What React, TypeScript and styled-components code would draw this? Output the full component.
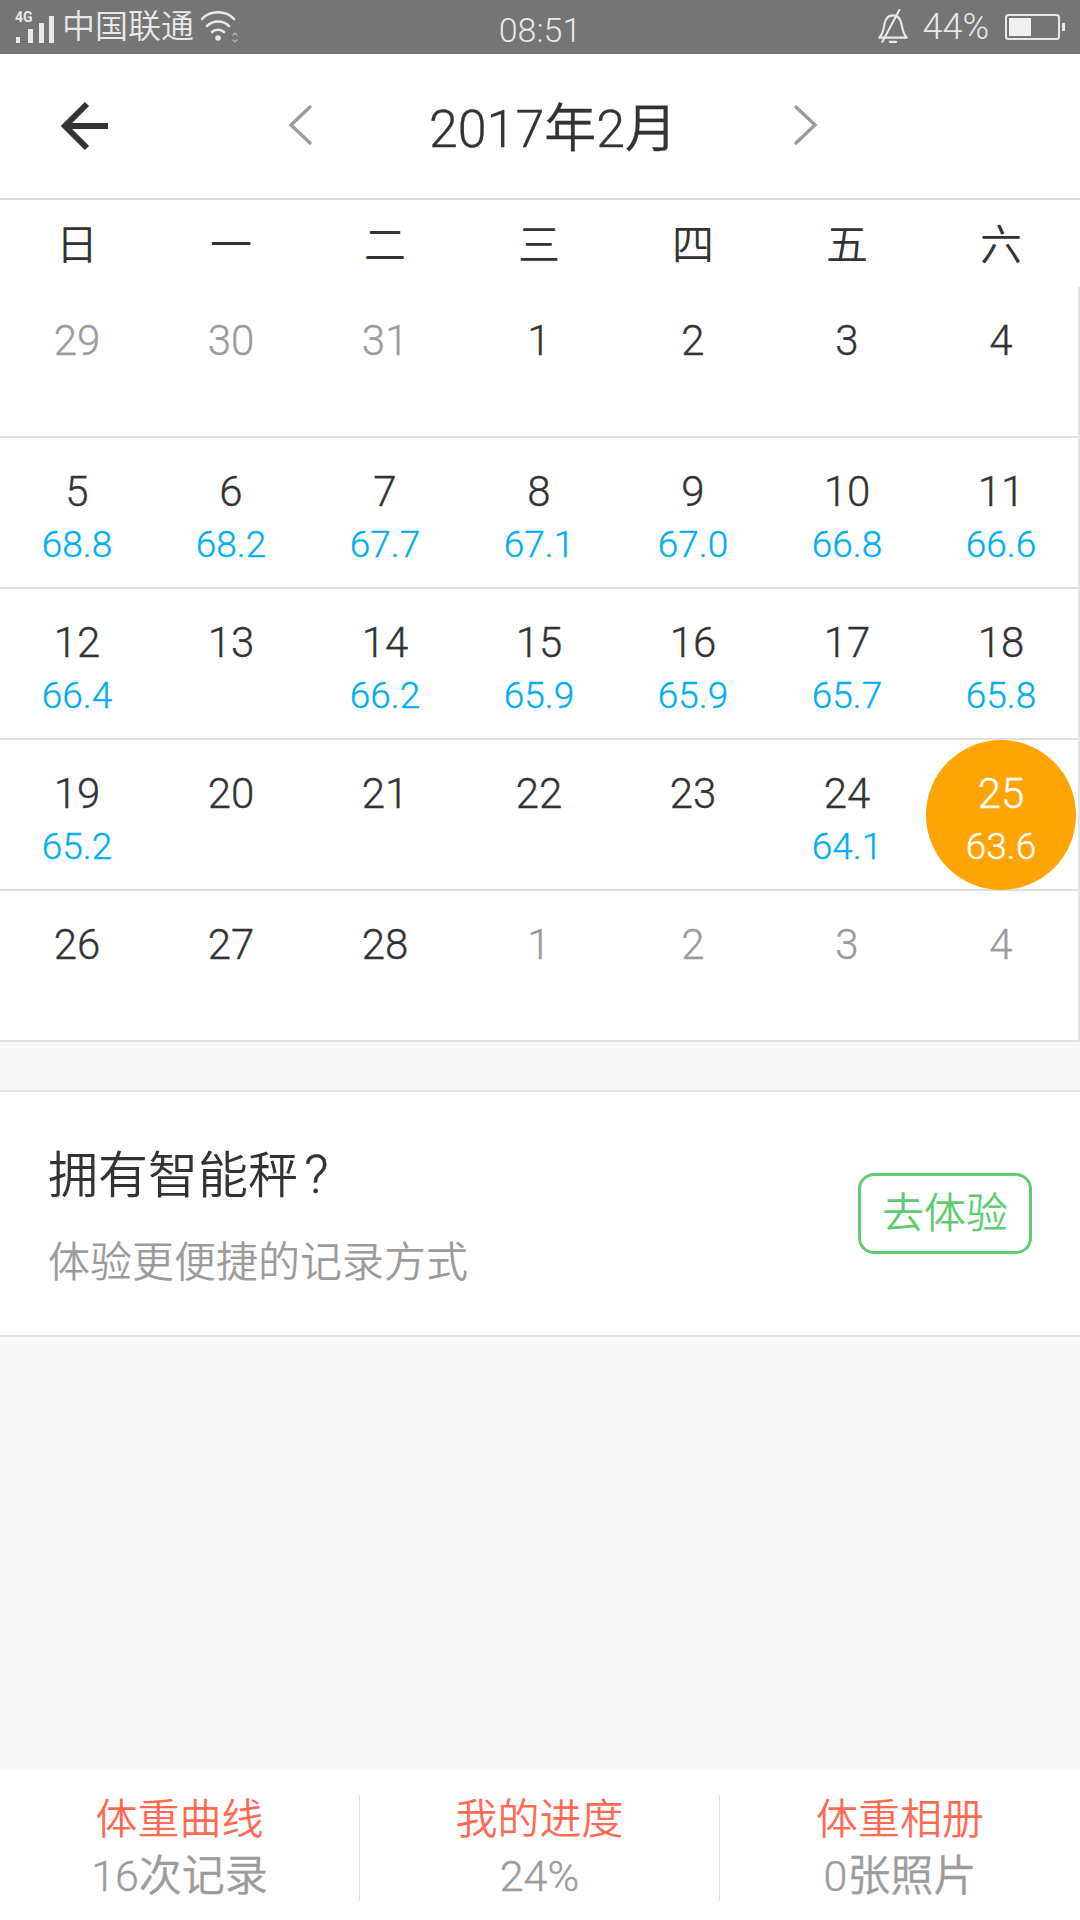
import React from 'react'
import styled, { createGlobalStyle, css } from 'styled-components'

const GlobalStyle = createGlobalStyle`
  html, body {
    margin: 0;
    padding: 0;
    background: #f8f8f8;
  }
  * {
    box-sizing: border-box;
  }
`

// Roboto only comes in 300/400 here, the reference digits sit between the two
const digitWeight = css`
  -webkit-text-stroke: 0.35px currentColor;
`

const Page = styled.div`
  width: 1080px;
  height: 1920px;
  display: flex;
  flex-direction: column;
  overflow: hidden;
  background: #f8f8f8;
  font-family: Roboto, 'Noto Sans CJK SC', sans-serif;
  font-weight: 350;
  color: #333;
`

const StatusBar = styled.div`
  height: 54px;
  flex: none;
  background: #757575;
  color: #e8e8e8;
  display: grid;
  grid-template-columns: 1fr auto 1fr;
  align-items: center;
  padding: 0 15px 0 15px;
`

const StatusLeft = styled.div`
  display: flex;
  align-items: center;
`

const StatusRight = styled.div`
  display: flex;
  align-items: center;
  justify-content: flex-end;
`

const Carrier = styled.span`
  font-size: 33px;
  line-height: 54px;
  margin-left: 7px;
  margin-right: 7px;
`

const Clock = styled.span`
  font-size: 34px;
  line-height: 54px;
  position: relative;
  top: 3px;
`

const Battery = styled.span`
  font-size: 36px;
  margin: 0 16px 0 13px;
`

const Header = styled.div`
  height: 146px;
  flex: none;
  background: #fff;
  border-bottom: 2px solid #ddd9d4;
  display: flex;
  align-items: center;
  padding-left: 61px;
`

const BackButton = styled.div`
  display: flex;
  width: 54px;
  margin-right: 172px;
`

const NavButton = styled.div`
  display: flex;
  width: 26px;
  position: relative;
  top: -1px;
`

const MonthTitle = styled.div`
  width: 480px;
  text-align: center;
  font-size: 52px;
  line-height: 60px;
  color: #333;
  position: relative;
  top: 4px;
  ${digitWeight}
`

const WeekRow = styled.div`
  height: 87px;
  flex: none;
  background: #fff;
  display: grid;
  grid-template-columns: repeat(7, 154px);
`

const WeekCell = styled.div`
  text-align: center;
  font-size: 42px;
  line-height: 92px;
  color: #333;
`

const CalendarGrid = styled.div`
  flex: none;
  background: #fff;
  display: grid;
  grid-template-columns: repeat(7, 154px);
  border-right: 2px solid #e2e2e2;
`

const DayCell = styled.div`
  height: 151px;
  position: relative;
  display: flex;
  flex-direction: column;
  align-items: center;
  padding-top: 29px;
  border-bottom: 2px solid #e0e0e0;
`

const SelectedCircle = styled.div`
  position: absolute;
  left: 2px;
  top: 0;
  width: 150px;
  height: 150px;
  border-radius: 50%;
  background: #ffa405;
`

const DayNumber = styled.div<{ $tone: 'normal' | 'muted' | 'selected' }>`
  position: relative;
  font-size: 42px;
  line-height: 50px;
  ${digitWeight}
  color: ${({ $tone }) =>
    $tone === 'muted' ? '#9c9c9c' : $tone === 'selected' ? '#fff' : '#333'};
`

const Weight = styled.div<{ $selected: boolean }>`
  position: relative;
  font-size: 37px;
  line-height: 42px;
  margin-top: 7px;
  ${digitWeight}
  color: ${({ $selected }) => ($selected ? '#fff' : '#00aeef')};
`

const Promo = styled.div`
  margin-top: 48px;
  height: 247px;
  flex: none;
  background: #fff;
  border-top: 2px solid #e2e2e2;
  border-bottom: 2px solid #e2e2e2;
  display: flex;
  align-items: center;
  justify-content: space-between;
  padding: 0 48px 0 48px;
`

const PromoText = styled.div`
  display: flex;
  flex-direction: column;
  padding-top: 6px;
`

const PromoTitle = styled.div`
  font-size: 50px;
  line-height: 60px;
  color: #333;
`

const QuestionMark = styled.span`
  font-size: 54px;
  margin-left: 6px;
  ${digitWeight}
`

const PromoHint = styled.div`
  font-size: 42px;
  line-height: 50px;
  margin-top: 32px;
  color: #9c9c9c;
`

const TryButton = styled.div`
  width: 174px;
  height: 81px;
  border: 3px solid #5fcb72;
  border-radius: 16px;
  color: #5fcb72;
  font-size: 42px;
  line-height: 75px;
  text-align: center;
`

const Spacer = styled.div`
  flex: 1;
`

const Footer = styled.div`
  height: 150px;
  flex: none;
  background: #fff;
  display: grid;
  grid-template-columns: 360px 360px 360px;
  padding: 25px 0 24px;
`

const FooterItem = styled.div<{ $divider: boolean }>`
  display: flex;
  flex-direction: column;
  align-items: center;
  border-right: ${({ $divider }) => ($divider ? '1px solid #e0e0e0' : 'none')};
`

const FooterTitle = styled.div`
  font-size: 42px;
  line-height: 50px;
  color: #ff6a55;
`

const FooterSub = styled.div`
  font-size: 43px;
  line-height: 50px;
  margin-top: 6px;
  color: #9c9c9c;
  ${digitWeight}
`

function SignalIcon() {
  return (
    <svg width="40" height="34" viewBox="0 0 40 34">
      <text x="0" y="12" fontSize="14" fontWeight="700" fill="#e8e8e8" fontFamily="Roboto, sans-serif">4G</text>
      <rect x="1" y="27" width="4" height="6" fill="#e8e8e8" />
      <rect x="13" y="19" width="5" height="14" fill="#e8e8e8" />
      <rect x="24" y="13" width="5" height="20" fill="#e8e8e8" />
      <rect x="34" y="6" width="5" height="27" fill="#e8e8e8" />
    </svg>
  )
}

function WifiIcon() {
  return (
    <svg width="38" height="34" viewBox="0 0 38 34" fill="none" stroke="#e8e8e8" strokeWidth="2.6" strokeLinecap="round">
      <path d="M1 9 C9 0 25 0 33 9" />
      <path d="M6 16 C12 10 22 10 28 16" />
      <path d="M11 22 C14 19 20 19 23 22" />
      <circle cx="17" cy="28" r="2.8" fill="#e8e8e8" stroke="none" />
      <path d="M32 25 l2 -2 l2 2 M32 30 l2 2 l2 -2" stroke="#bdbdbd" strokeWidth="1.2" />
    </svg>
  )
}

function MutedBellIcon() {
  return (
    <svg width="32" height="36" viewBox="0 0 30 34" fill="none" stroke="#e8e8e8" strokeWidth="2" strokeLinecap="round" strokeLinejoin="round">
      <path d="M2 27 C6 23 6 19 7 14 C8 9 11 6 15 6 C19 6 22 9 23 14 C24 20 25 24 28 27 Z" />
      <path d="M21 1 L5 31" />
      <path d="M12 31 H18" />
    </svg>
  )
}

function BatteryIcon() {
  return (
    <svg width="60" height="28" viewBox="0 0 60 28">
      <rect x="1" y="2" width="53" height="24" rx="2.5" fill="none" stroke="#e8e8e8" strokeWidth="2" />
      <rect x="4" y="5" width="22" height="18" fill="#f0f0f0" />
      <rect x="57" y="10" width="3" height="8" fill="#e8e8e8" />
    </svg>
  )
}

function BackIcon() {
  return (
    <svg width="54" height="50" viewBox="0 0 54 50" fill="none" stroke="#333" strokeWidth="6">
      <path d="M26 3 L4 25 L26 47" />
      <path d="M5 25 H47" />
    </svg>
  )
}

function Chevron({ right }: { right?: boolean }) {
  return (
    <svg width="26" height="42" viewBox="0 0 26 42" fill="none" stroke="#9c9c9c" strokeWidth="3.4" strokeLinecap="round">
      <path d={right ? 'M3 3 L22 21 L3 39' : 'M23 3 L4 21 L23 39'} />
    </svg>
  )
}

type Day = { day: number; muted?: boolean; weight?: string; selected?: boolean }

const weekdays = ['日', '一', '二', '三', '四', '五', '六']

const days: Day[] = [
  { day: 29, muted: true },
  { day: 30, muted: true },
  { day: 31, muted: true },
  { day: 1 },
  { day: 2 },
  { day: 3 },
  { day: 4 },
  { day: 5, weight: '68.8' },
  { day: 6, weight: '68.2' },
  { day: 7, weight: '67.7' },
  { day: 8, weight: '67.1' },
  { day: 9, weight: '67.0' },
  { day: 10, weight: '66.8' },
  { day: 11, weight: '66.6' },
  { day: 12, weight: '66.4' },
  { day: 13 },
  { day: 14, weight: '66.2' },
  { day: 15, weight: '65.9' },
  { day: 16, weight: '65.9' },
  { day: 17, weight: '65.7' },
  { day: 18, weight: '65.8' },
  { day: 19, weight: '65.2' },
  { day: 20 },
  { day: 21 },
  { day: 22 },
  { day: 23 },
  { day: 24, weight: '64.1' },
  { day: 25, weight: '63.6', selected: true },
  { day: 26 },
  { day: 27 },
  { day: 28 },
  { day: 1, muted: true },
  { day: 2, muted: true },
  { day: 3, muted: true },
  { day: 4, muted: true },
]

const footerItems = [
  { title: '体重曲线', sub: '16次记录' },
  { title: '我的进度', sub: '24%' },
  { title: '体重相册', sub: '0张照片' },
]

export default function App() {
  return (
    <Page>
      <GlobalStyle />
      <StatusBar>
        <StatusLeft>
          <SignalIcon />
          <Carrier>中国联通</Carrier>
          <WifiIcon />
        </StatusLeft>
        <Clock>08:51</Clock>
        <StatusRight>
          <MutedBellIcon />
          <Battery>44%</Battery>
          <BatteryIcon />
        </StatusRight>
      </StatusBar>
      <Header>
        <BackButton>
          <BackIcon />
        </BackButton>
        <NavButton>
          <Chevron />
        </NavButton>
        <MonthTitle>2017年2月</MonthTitle>
        <NavButton>
          <Chevron right />
        </NavButton>
      </Header>
      <WeekRow>
        {weekdays.map((d) => (
          <WeekCell key={d}>{d}</WeekCell>
        ))}
      </WeekRow>
      <CalendarGrid>
        {days.map((d, i) => (
          <DayCell key={i}>
            {d.selected && <SelectedCircle />}
            <DayNumber $tone={d.selected ? 'selected' : d.muted ? 'muted' : 'normal'}>{d.day}</DayNumber>
            {d.weight && <Weight $selected={!!d.selected}>{d.weight}</Weight>}
          </DayCell>
        ))}
      </CalendarGrid>
      <Promo>
        <PromoText>
          <PromoTitle>拥有智能秤<QuestionMark>?</QuestionMark></PromoTitle>
          <PromoHint>体验更便捷的记录方式</PromoHint>
        </PromoText>
        <TryButton>去体验</TryButton>
      </Promo>
      <Spacer />
      <Footer>
        {footerItems.map((item, i) => (
          <FooterItem key={item.title} $divider={i < 2}>
            <FooterTitle>{item.title}</FooterTitle>
            <FooterSub>{item.sub}</FooterSub>
          </FooterItem>
        ))}
      </Footer>
    </Page>
  )
}
